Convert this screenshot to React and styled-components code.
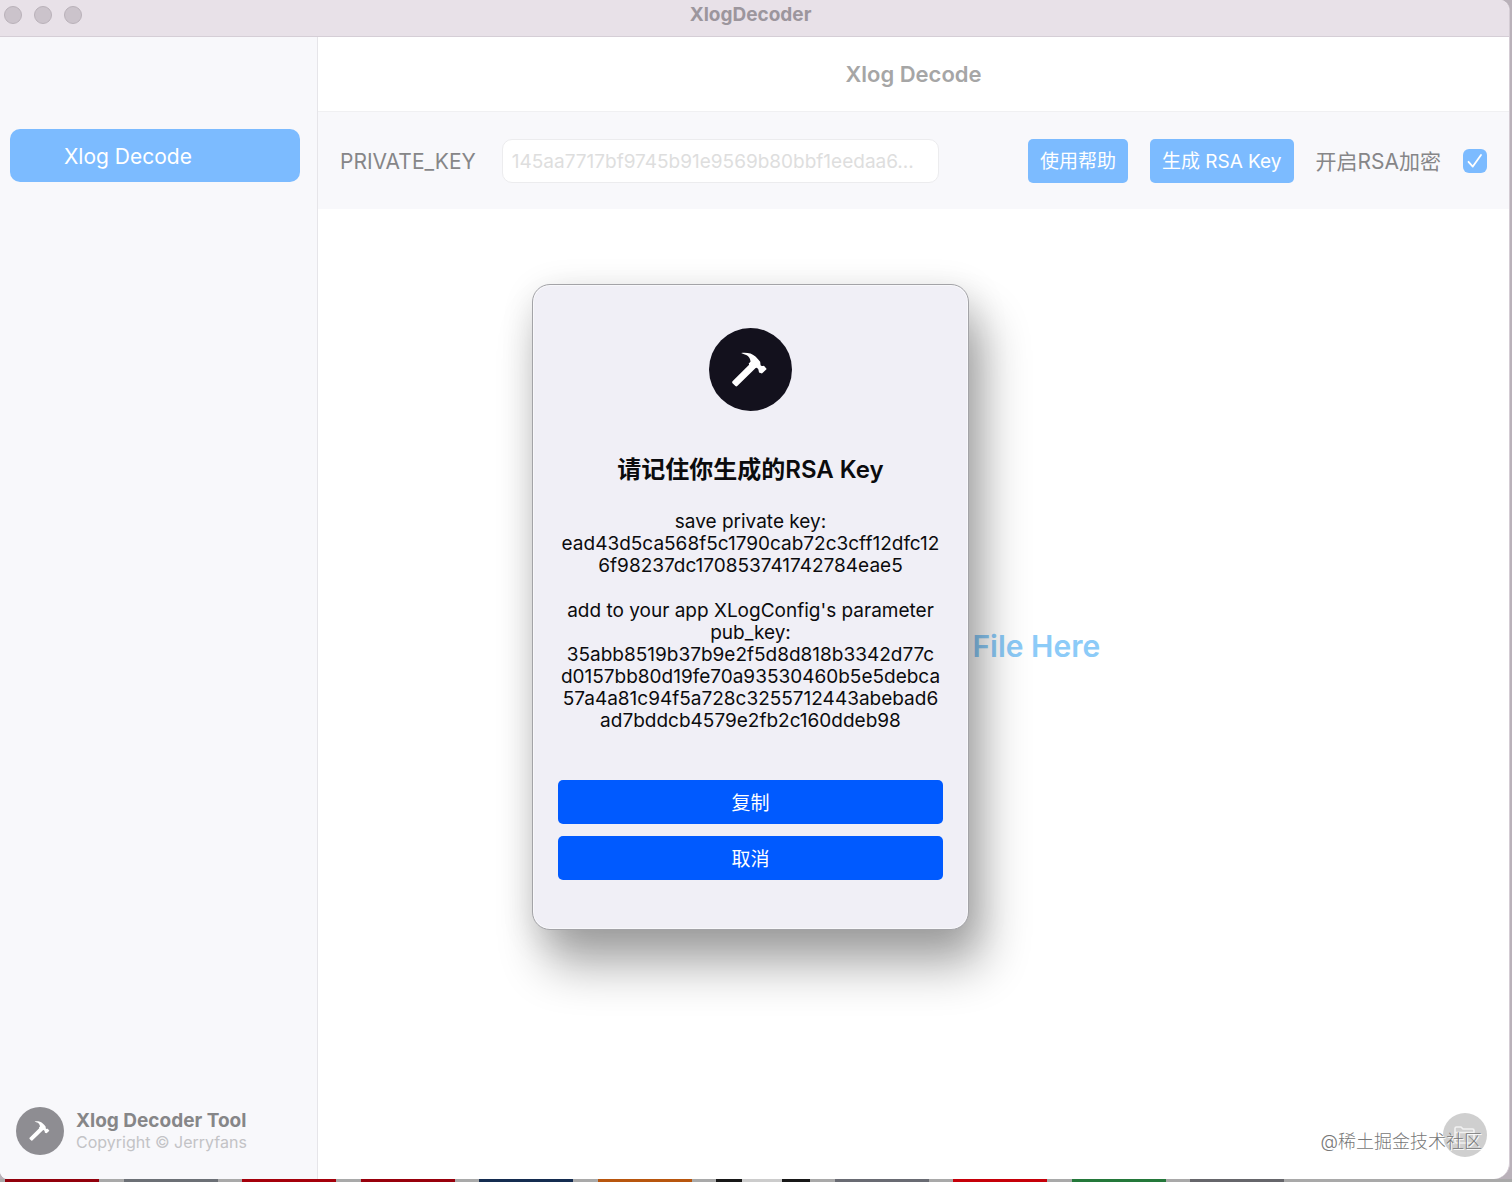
import React from "react";
import styled, { createGlobalStyle } from "styled-components";

const GlobalStyle = createGlobalStyle`
  *, *::before, *::after { box-sizing: border-box; }
  body {
    margin: 0;
    background: #b9b1b9;
    font-family: Inter, "Noto Sans CJK SC", sans-serif;
  }
  button, input { font: inherit; }
  h1, h2, p { margin: 0; }
`;

const Desktop = styled.div`
  position: relative;
  min-height: 100vh;
  display: flex;
  flex-direction: column;
`;

const Window = styled.div`
  flex: 1;
  display: flex;
  flex-direction: column;
  margin-right: 2px;
  background: #fff;
  border-right: 1px solid #d4ccd4;
  border-radius: 0 10px 16px 8px;
  overflow: hidden;
`;

const TitleBar = styled.header`
  display: grid;
  grid-template-columns: 1fr auto 1fr;
  align-items: center;
  height: 37px;
  padding: 0 12px 6px 4px;
  background: #e8e1e8;
  border-bottom: 1px solid #d5ced6;
`;

const Lights = styled.div`
  display: flex;
  gap: 12px;
`;

const Light = styled.button`
  width: 18px;
  height: 18px;
  padding: 0;
  border: 1px solid #b9b1b9;
  border-radius: 50%;
  background: #cbc3cb;
`;

const WindowTitle = styled.h1`
  font-size: 19px;
  line-height: 24px;
  font-weight: 700;
  color: #9c969d;
`;

const Body = styled.div`
  flex: 1;
  display: flex;
`;

const Sidebar = styled.aside`
  flex: none;
  width: 318px;
  display: flex;
  flex-direction: column;
  justify-content: space-between;
  padding: 92px 17px 24px 10px;
  background: #f8f8fb;
  border-right: 1px solid #e6e5e9;
`;

const NavLink = styled.a`
  display: block;
  padding: 2px 54px 0;
  border-radius: 10px;
  background: #7cbbff;
  color: #fff;
  font-size: 21px;
  line-height: 51px;
  text-decoration: none;
`;

const Brand = styled.div`
  display: flex;
  align-items: center;
  gap: 12px;
  padding-left: 6px;
`;

const BrandName = styled.p`
  font-size: 19px;
  line-height: 22px;
  font-weight: 700;
  color: #868688;
`;

const Copyright = styled.p`
  font-size: 16px;
  line-height: 20px;
  color: #c3c3c6;
`;

const Main = styled.main`
  flex: 1;
  min-width: 0;
  display: flex;
  flex-direction: column;
`;

const PageTitle = styled.h2`
  font-size: 22px;
  line-height: 74px;
  font-weight: 600;
  text-align: center;
  color: #a6a6a6;
`;

const Toolbar = styled.form`
  display: flex;
  align-items: center;
  gap: 22px;
  height: 98px;
  padding: 0 22px;
  background: #f8f8fb;
  border-top: 1px solid #f0f0f2;
`;

const KeyField = styled.div`
  flex: 1;
  display: flex;
  align-items: center;
  gap: 26px;
`;

const FieldLabel = styled.label`
  padding-top: 2px;
  font-size: 21px;
  line-height: 28px;
  color: #868688;
`;

const KeyInput = styled.input`
  flex: 0 1 437px;
  min-width: 0;
  height: 44px;
  padding: 2px 9px 0;
  border: 1px solid #ececee;
  border-radius: 10px;
  background: #fff;
  font-size: 19px;
  text-overflow: ellipsis;
  &::placeholder { color: #dedede; opacity: 1; }
`;

const ActionButton = styled.button`
  height: 44px;
  padding: 3px 12px 0;
  border: 0;
  border-radius: 5px;
  background: ${(p) => (p.$solid ? "#005aff" : "#7cbbff")};
  color: #fff;
  font-size: 19px;
  line-height: 40px;
  white-space: nowrap;
`;

const CheckHolder = styled.span`
  display: grid;
  width: 24px;
  height: 24px;
  & > * { grid-area: 1 / 1; }
  & > svg { pointer-events: none; }
`;

const CheckInput = styled.input`
  appearance: none;
  width: 24px;
  height: 24px;
  margin: 0;
  border-radius: 6px;
  background: #7cbbff;
`;

const DropZone = styled.section`
  flex: 1;
  display: flex;
  align-items: center;
  justify-content: center;
  padding-bottom: 96px;
`;

const DropHint = styled.p`
  font-size: 30px;
  line-height: 40px;
  font-weight: 600;
  color: #8ccbf8;
`;

const Overlay = styled.div`
  position: absolute;
  inset: 0;
  display: flex;
  justify-content: center;
  align-items: flex-start;
  padding: 284px 11px 0 0;
`;

const Dialog = styled.div`
  width: 437px;
  display: flex;
  flex-direction: column;
  align-items: center;
  padding: 43px 25px 49px;
  border: 1px solid #a3a3a7;
  border-radius: 18px;
  background: #f0eff6;
  box-shadow: inset 0 0 0 1px #f8f8fb, 14px 36px 48px rgba(0, 0, 0, 0.32),
    4px 8px 36px rgba(0, 0, 0, 0.14);
  color: #0b0b0d;
  text-align: center;
`;

const DialogTitle = styled.h2`
  padding: 43px 0 25px;
  font-size: 24px;
  line-height: 32px;
  font-weight: 600;
  white-space: nowrap;
`;

const Message = styled.p`
  padding-bottom: 23px;
  font-size: 19px;
  line-height: 22px;
  white-space: pre;
`;

const DialogActions = styled.div`
  align-self: stretch;
  display: grid;
  gap: 12px;
  padding-top: 25px;
`;

const OpenFolder = styled.button`
  position: absolute;
  right: 25px;
  bottom: 25px;
  display: grid;
  place-items: center;
  width: 44px;
  height: 44px;
  padding: 0;
  border: 0;
  border-radius: 50%;
  background: #cfcfcf;
`;

const Watermark = styled.span`
  position: absolute;
  right: 30px;
  bottom: 27px;
  font-size: 18px;
  line-height: 26px;
  font-weight: 300;
  color: #777;
  text-shadow: 1px 1px 0 #fff;
`;

const Dock = styled.div`
  display: flex;
  justify-content: space-between;
  height: 3px;
  padding: 0 228px 0 5px;
  background: #a9a9a9;
`;

const DockIcon = styled.span`
  width: 94px;
  background: ${(p) => p.$color};
`;

const dockColors = [
  "#92000c", "#6c7076", "#a5000b", "#98000c", "#142c50", "#b8560e",
  "linear-gradient(90deg, #181818 28%, #ccc 28%, #ccc 70%, #181818 70%)",
  "#696b73", "#c60009", "#24783a", "#66666b",
];

const privateKey = ["ead43d5ca568f5c1790cab72c3cff12dfc12", "6f98237dc170853741742784eae5"];
const publicKey = [
  "35abb8519b37b9e2f5d8d818b3342d77c",
  "d0157bb80d19fe70a93530460b5e5debca",
  "57a4a81c94f5a728c3255712443abebad6",
  "ad7bddcb4579e2fb2c160ddeb98",
];

function HammerBadge({ size, fill }) {
  return (
    <svg width={size} height={size} viewBox="0 0 84 84" aria-hidden="true">
      <circle cx="42" cy="42" r="42" fill={fill} />
      <path
        fill="#fff"
        d="M32.5 25.2C36 24.8 39 25 42 25.8C46 27.3 49 30.5 51.8 34.2L52.2 37.8C53 39 54.4 38.4 55.6 38.2L58.4 41.4L53.6 46L50.6 45L50 42L48.6 40.2L47.2 40.6L28.6 58.8C28 59.3 27.2 59.2 26.7 58.7L23.8 55.8C23.3 55.2 23.3 54.5 23.8 54L40.6 37.2L40.2 36L42 34.2C42 30.5 39.5 27.4 35.5 26.5Z"
      />
    </svg>
  );
}

export default function App() {
  return (
    <Desktop>
      <GlobalStyle />
      <Window>
        <TitleBar>
          <Lights>
            <Light type="button" aria-label="Close" />
            <Light type="button" aria-label="Minimize" />
            <Light type="button" aria-label="Zoom" />
          </Lights>
          <WindowTitle>XlogDecoder</WindowTitle>
        </TitleBar>
        <Body>
          <Sidebar>
            <nav>
              <NavLink href="#decode">Xlog Decode</NavLink>
            </nav>
            <Brand>
              <HammerBadge size={48} fill="#8e8d92" />
              <div>
                <BrandName>Xlog Decoder Tool</BrandName>
                <Copyright>Copyright © Jerryfans</Copyright>
              </div>
            </Brand>
          </Sidebar>
          <Main>
            <PageTitle>Xlog Decode</PageTitle>
            <Toolbar>
              <KeyField>
                <FieldLabel htmlFor="private-key">PRIVATE_KEY</FieldLabel>
                <KeyInput id="private-key" placeholder="145aa7717bf9745b91e9569b80bbf1eedaa6..." />
              </KeyField>
              <ActionButton type="button">使用帮助</ActionButton>
              <ActionButton type="button">生成 RSA Key</ActionButton>
              <FieldLabel htmlFor="use-rsa">开启RSA加密</FieldLabel>
              <CheckHolder>
                <CheckInput id="use-rsa" type="checkbox" defaultChecked />
                <svg width="24" height="24" viewBox="0 0 24 24" aria-hidden="true">
                  <path d="M5.5 12.8L9.8 17.6L18 6" fill="none" stroke="#fff" strokeWidth="1.8" strokeLinecap="round" strokeLinejoin="round" />
                </svg>
              </CheckHolder>
            </Toolbar>
            <DropZone>
              <DropHint>Drag And Drop a File Here</DropHint>
            </DropZone>
          </Main>
        </Body>
      </Window>
      <Dock>
        {dockColors.map((color, i) => (
          <DockIcon key={i} $color={color} />
        ))}
      </Dock>
      <OpenFolder type="button" aria-label="Open folder">
        <svg width="22" height="18" viewBox="0 0 22 18" fill="none" stroke="#f2f2f2" strokeWidth="1.6" strokeLinejoin="round" aria-hidden="true">
          <path d="M1 15V2.5Q1 1 2.5 1H7L9 3H18.5Q20 3 20 4.5V15Q20 17 18 17H3Q1 17 1 15ZM1 6.5H20" />
        </svg>
      </OpenFolder>
      <Watermark>@稀土掘金技术社区</Watermark>
      <Overlay>
        <Dialog role="dialog" aria-labelledby="dialog-title">
          <HammerBadge size={83} fill="#13111d" />
          <DialogTitle id="dialog-title">请记住你生成的RSA Key</DialogTitle>
          <Message>{["save private key:", ...privateKey].join("\n")}</Message>
          <Message>
            {["add to your app XLogConfig's parameter", "pub_key:", ...publicKey].join("\n")}
          </Message>
          <DialogActions>
            <ActionButton type="button" $solid>复制</ActionButton>
            <ActionButton type="button" $solid>取消</ActionButton>
          </DialogActions>
        </Dialog>
      </Overlay>
    </Desktop>
  );
}
